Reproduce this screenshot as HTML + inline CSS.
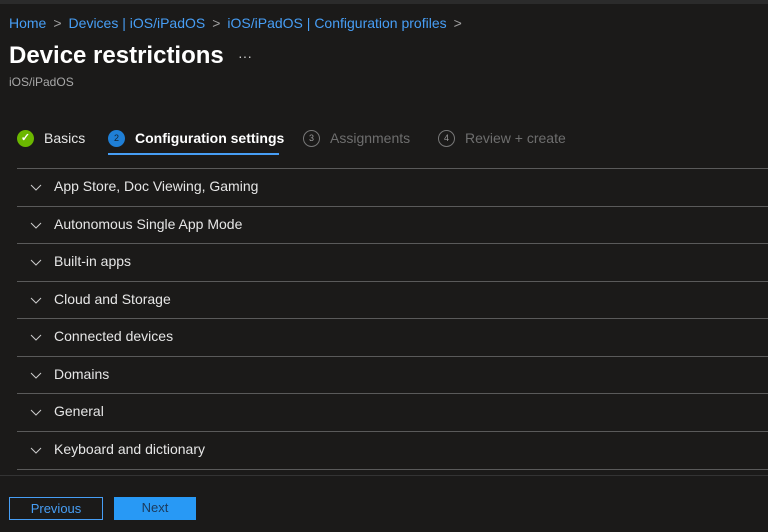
<!DOCTYPE html><html><head><style>
body{margin:0;width:768px;height:532px;background:#1b1a19;font-family:"Liberation Sans",sans-serif;position:relative;overflow:hidden;color:#fff}
.top{position:absolute;left:0;top:0;width:768px;height:4px;background:#2b2b2b}
.bc{position:absolute;left:9px;top:15px;font-size:14px;color:#479ef5;white-space:nowrap}
.bc span{color:#a0a0a0;margin:0 7px}
h1{position:absolute;left:9px;top:42px;margin:0;font-size:24px;font-weight:bold;color:#fff}
.dots{position:absolute;left:238px;top:48px;color:#ccc;font-size:14px}
.sub{position:absolute;left:9px;top:75px;font-size:12px;color:#a8a8a8}
.step{position:absolute;top:129px;height:18px;font-size:14px;white-space:nowrap;display:flex;align-items:center}
.c{display:inline-block;width:17px;height:17px;border-radius:50%;margin-right:10px;text-align:center;font-size:9px;line-height:17px;box-sizing:border-box;flex:none}
.ul{position:absolute;left:108px;top:153px;width:171px;height:2px;background:#479ef5}
.row{position:absolute;left:17px;width:751px;height:37px;border-top:1px solid #5a5a5a;font-size:14px;color:#e6e6e6}
.row .t{position:absolute;left:37px;top:9px}
.row svg{position:absolute;left:13px;top:15px}
.bot{position:absolute;left:0;top:475px;width:768px;height:1px;background:#333}
.btn{position:absolute;top:497px;height:23px;box-sizing:border-box;font-size:13px;text-align:center;line-height:21px}
</style></head><body>
<div class="top"></div>
<div class="bc">Home<span>&gt;</span>Devices | iOS/iPadOS<span>&gt;</span>iOS/iPadOS | Configuration profiles<span>&gt;</span></div>
<h1>Device restrictions</h1><div class="dots">···</div>
<div class="sub">iOS/iPadOS</div>
<div class="step" style="left:17px;color:#e6e6e6"><span class="c" style="background:#6bb700;color:#fff;font-size:11px;font-weight:bold">✓</span>Basics</div>
<div class="step" style="left:108px;color:#fff;font-weight:bold"><span class="c" style="background:#1f7fd6;color:#123;font-weight:normal">2</span>Configuration settings</div>
<div class="step" style="left:303px;color:#6e6e6e"><span class="c" style="border:1px solid #777;color:#999;line-height:15px">3</span>Assignments</div>
<div class="step" style="left:438px;color:#6e6e6e"><span class="c" style="border:1px solid #777;color:#999;line-height:15px">4</span>Review + create</div>
<div class="ul"></div>
<div class="row" style="top:168px"><svg width="12" height="7"><path d="M1 1l5 5 5-5" stroke="#ccc" fill="none"/></svg><span class="t">App Store, Doc Viewing, Gaming</span></div>
<div class="row" style="top:206px"><svg width="12" height="7"><path d="M1 1l5 5 5-5" stroke="#ccc" fill="none"/></svg><span class="t">Autonomous Single App Mode</span></div>
<div class="row" style="top:243px"><svg width="12" height="7"><path d="M1 1l5 5 5-5" stroke="#ccc" fill="none"/></svg><span class="t">Built-in apps</span></div>
<div class="row" style="top:281px"><svg width="12" height="7"><path d="M1 1l5 5 5-5" stroke="#ccc" fill="none"/></svg><span class="t">Cloud and Storage</span></div>
<div class="row" style="top:318px"><svg width="12" height="7"><path d="M1 1l5 5 5-5" stroke="#ccc" fill="none"/></svg><span class="t">Connected devices</span></div>
<div class="row" style="top:356px"><svg width="12" height="7"><path d="M1 1l5 5 5-5" stroke="#ccc" fill="none"/></svg><span class="t">Domains</span></div>
<div class="row" style="top:393px"><svg width="12" height="7"><path d="M1 1l5 5 5-5" stroke="#ccc" fill="none"/></svg><span class="t">General</span></div>
<div class="row" style="top:431px"><svg width="12" height="7"><path d="M1 1l5 5 5-5" stroke="#ccc" fill="none"/></svg><span class="t">Keyboard and dictionary</span></div>
<div class="row" style="top:469px;height:5px"></div>
<div class="bot"></div>
<div class="btn" style="left:9px;width:94px;border:1px solid #479ef5;color:#479ef5">Previous</div>
<div class="btn" style="left:114px;width:82px;background:#2899f5;color:#1b3a5c">Next</div>
</body></html>
